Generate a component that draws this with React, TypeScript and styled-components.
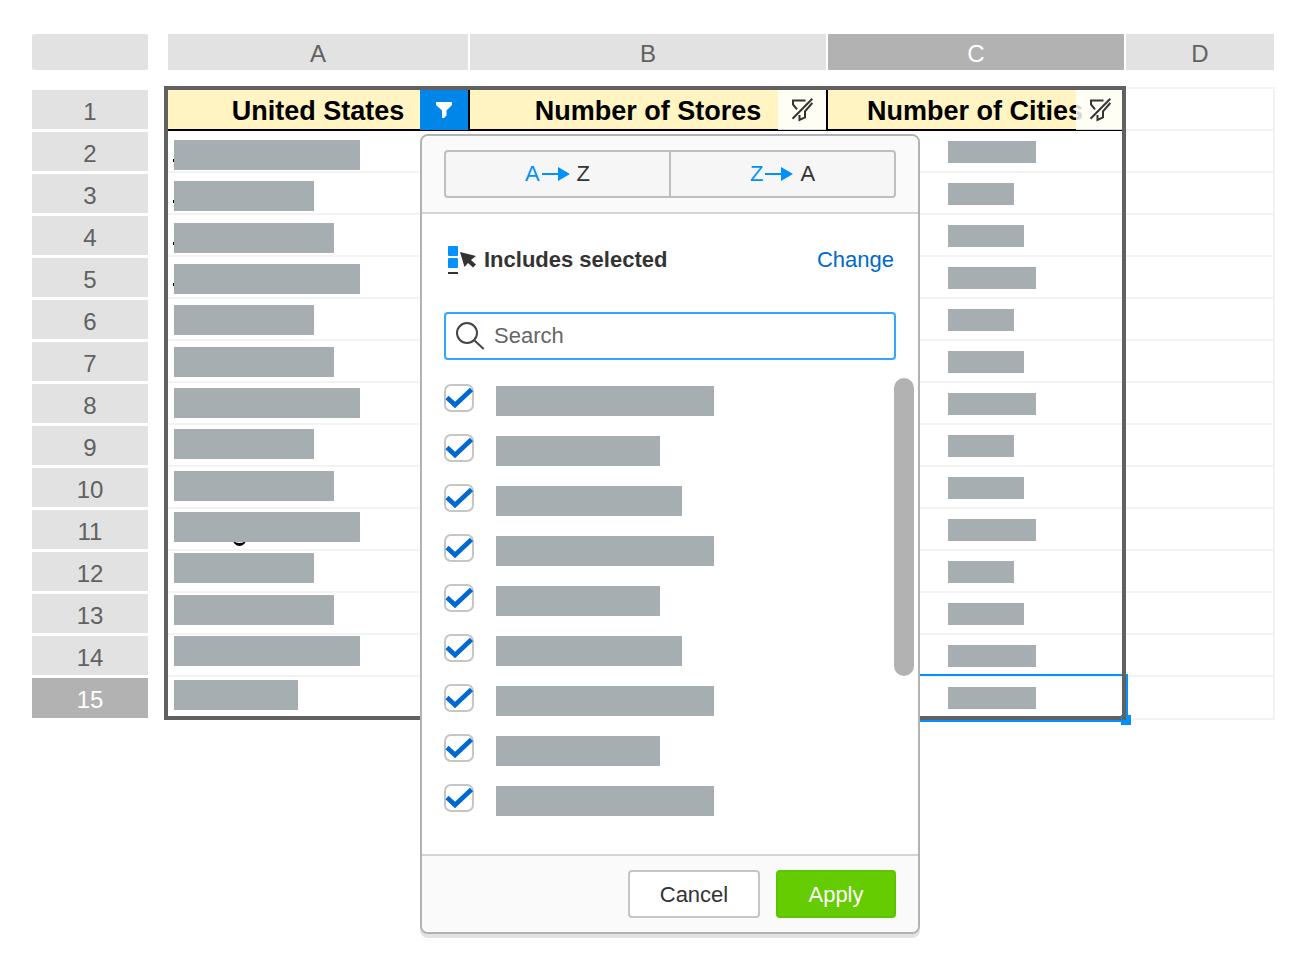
import React from "react";
import styled, { createGlobalStyle, css } from "styled-components";

const BAR = "#a6aeb1";
const BLUE = "#0091ff";
const FRAME = "#616161";
const LINE = "#f3f3f3";

const GlobalStyle = createGlobalStyle`
  *, *::before, *::after { box-sizing: border-box; }
  body {
    margin: 0;
    background: #fff;
    font-family: "Liberation Sans", Arial, Helvetica, sans-serif;
  }
  button, input { font-family: inherit; }
`;

const Page = styled.main`
  min-height: 100vh;
  padding: 34px 25px 34px 32px;
`;

const Sheet = styled.table`
  width: 100%;
  table-layout: fixed;
  border-spacing: 0;

  td, th { padding: 0; }
`;

const Col = styled.col<{ $width?: number }>`
  width: ${(p) => (p.$width ? `${p.$width}px` : "auto")};
`;

const LabelText = css<{ $active?: boolean }>`
  font-size: 24px;
  font-weight: 400;
  color: ${(p) => (p.$active ? "#fff" : "#616161")};
  background: ${(p) => (p.$active ? "#b2b2b2" : "#e2e2e2")};
`;

const Corner = styled.td`
  background: #e2e2e2;
  border-radius: 2px;
`;

const ColumnLabel = styled.th<{ $active?: boolean }>`
  ${LabelText}
  height: 36px;
  padding-top: 3px !important;
  line-height: 32px;
  border-right: 2px solid #fff;

  &:last-child { border-right-width: 1px; }
`;

const RowLabel = styled.th<{ $active?: boolean; $first?: boolean }>`
  ${LabelText}
  padding-top: 4px !important;
  line-height: 32px;
  border-top: ${(p) => (p.$first ? 0 : 1)}px solid #fff;
  border-bottom: 2px solid #fff;
`;

const GapCell = styled.td<{ $edge?: "frame" | "line" }>`
  height: 20px;
  ${(p) => p.$edge === "frame" && `border-bottom: 4px solid ${FRAME};`}
  ${(p) => p.$edge === "line" && `background: linear-gradient(${LINE}, ${LINE}) 0 17px / 100% 2px no-repeat;`}
`;

const FrameCell = styled.td`
  position: relative;
  z-index: 2;
  background: ${FRAME};
`;

const Row = styled.tr<{ $height: number }>`
  height: ${(p) => p.$height}px;
`;

const Cell = styled.td<{ $framed?: boolean; $closing?: boolean; $indent?: boolean }>`
  position: relative;
  vertical-align: top;
  padding: ${(p) => (p.$indent ? "10px 0 0 120px" : "0")} !important;
  border-right: ${(p) => (p.$framed ? 0 : 2)}px solid ${LINE};
  border-bottom: 2px solid ${LINE};
  ${(p) => p.$closing && `border-bottom: 4px solid ${FRAME};`}
`;

const TitleCell = styled.th<{ $framed?: boolean }>`
  position: relative;
  background: #fff4c2;
  border-bottom: 2px solid #000;
  border-right: ${(p) => (p.$framed ? 0 : 2)}px solid #000;
  padding-top: 2px !important;
  font-size: 27px;
  line-height: 36px;
  font-weight: 700;
  color: #000;
  white-space: nowrap;
`;

const FilterAnchor = styled.div<{ $open?: boolean; $framed?: boolean }>`
  position: absolute;
  z-index: ${(p) => (p.$open ? 5 : 1)};
  top: 0;
  right: ${(p) => (p.$framed ? -2 : 0)}px;
  width: 48px;
  height: 40px;
`;

const FilterButton = styled.button<{ $active?: boolean }>`
  display: flex;
  align-items: center;
  justify-content: center;
  width: 100%;
  height: 100%;
  padding: 0;
  border: 0;
  background: ${(p) => (p.$active ? "#0085e8" : "rgba(255, 255, 255, 0.84)")};
`;

const Bar = styled.span<{ $width: number; $height: number }>`
  position: relative;
  display: block;
  width: ${(p) => p.$width}px;
  height: ${(p) => p.$height}px;
  background: ${BAR};
`;

const NameBars = styled.div`
  position: absolute;
  z-index: 1;
  top: 9px;
  left: 6px;
`;

const NameStack = styled.div`
  display: flex;
  flex-direction: column;
  justify-content: space-between;
  height: 526px;
  margin-bottom: 14px;
`;

const NameBar = styled(Bar)<{ $peek?: "foot" | "tail" }>`
  ${(p) =>
    p.$peek === "foot" &&
    `&::before {
      content: "";
      position: absolute;
      left: -1px;
      top: 19px;
      width: 1px;
      height: 3px;
      background: #000;
    }`}
  ${(p) =>
    p.$peek === "tail" &&
    `&::before {
      content: "";
      position: absolute;
      left: 59px;
      top: 25px;
      width: 13px;
      height: 9px;
      border-bottom: 3px solid #000;
      border-radius: 0 0 7px 7px;
      clip-path: inset(5px 0 0 0);
    }`}
`;

const Selection = styled.div`
  position: absolute;
  z-index: 1;
  inset: -3px -6px -6px 0;
  border: 2px solid ${BLUE};
  border-left: 0;
`;

const Handle = styled.span`
  position: absolute;
  right: -7px;
  bottom: -5px;
  width: 12px;
  height: 10px;
  border-right: 2px solid #fff;
  background: ${BLUE};
`;

const Popup = styled.section`
  position: absolute;
  top: 44px;
  left: 0;
  width: 500px;
  overflow: hidden;
  border: 2px solid #b2b2b2;
  border-radius: 8px;
  background: #fff;
  box-shadow: 0 4px 0 #e2e2e2;
  font-size: 22px;
  line-height: 24px;
  font-weight: 400;
  color: #333;
  text-align: left;
`;

const SortBar = styled.header`
  padding: 14px 22px;
  border-bottom: 2px solid #d4d4d4;
  background: #fafafa;
`;

const SortGroup = styled.div`
  display: flex;
  border: 2px solid #bfbfbf;
  border-radius: 4px;
  background: #f6f6f6;
`;

const SortButton = styled.button`
  display: flex;
  flex: 1;
  align-items: center;
  justify-content: center;
  height: 44px;
  padding: 0;
  border: 0;
  background: none;
  font-size: 22px;
  color: #333;

  & + & { border-left: 2px solid #bfbfbf; }
  svg { margin: 0 7px 0 2px; }
`;

const From = styled.span`
  color: ${BLUE};
`;

const ModeRow = styled.div`
  display: flex;
  align-items: center;
  padding: 32px 24px 38px 26px;

  svg { margin-right: 8px; }
`;

const ModeTitle = styled.strong`
  flex: 1;
`;

const ChangeLink = styled.a`
  color: #0069cc;
  text-decoration: none;
`;

const SearchBox = styled.label`
  display: flex;
  align-items: center;
  height: 48px;
  margin: 0 22px;
  padding-left: 10px;
  border: 2px solid #33a7ff;
  border-radius: 4px;
`;

const SearchInput = styled.input`
  flex: 1;
  min-width: 0;
  margin-left: 8px;
  padding: 0;
  border: 0;
  outline: 0;
  background: none;
  font-size: 22px;
  color: #333;

  &::placeholder { color: #666; opacity: 1; }
`;

const ListArea = styled.div`
  display: flex;
  justify-content: space-between;
  padding: 18px 4px 38px 22px;
`;

const Options = styled.div`
  display: flex;
  flex-direction: column;
  gap: 18px;
  padding-top: 6px;
`;

const Option = styled.label`
  display: flex;
  align-items: flex-end;
  gap: 22px;
  height: 32px;
`;

const CheckSlot = styled.span`
  display: grid;
  align-self: flex-start;

  > * { grid-area: 1 / 1; }
  svg { pointer-events: none; display: none; position: relative; }
  input:checked + svg { display: block; }
`;

const CheckInput = styled.input`
  appearance: none;
  width: 30px;
  height: 28px;
  margin: 0;
  border: 2px solid #c6c6c6;
  border-radius: 7px;
  background: #fff;
`;

const ScrollThumb = styled.div`
  width: 20px;
  height: 298px;
  border-radius: 10px;
  background: #b2b2b2;
`;

const Footer = styled.footer`
  display: flex;
  justify-content: flex-end;
  gap: 16px;
  padding: 14px 22px;
  border-top: 2px solid #d4d4d4;
  background: #fafafa;
`;

const ActionButton = styled.button<{ $primary?: boolean }>`
  width: ${(p) => (p.$primary ? 120 : 132)}px;
  height: 48px;
  padding: 2px 0 0;
  border: 2px solid ${(p) => (p.$primary ? "#5fc400" : "#c6c6c6")};
  border-radius: 4px;
  background: ${(p) => (p.$primary ? "#64cc00" : "#fff")};
  font-size: 22px;
  color: ${(p) => (p.$primary ? "#fff" : "#333")};
`;

const FunnelIcon = () => (
  <svg width="16" height="16" viewBox="0 0 16 16" aria-hidden="true">
    <path d="M0 0h16v3l-5.500 5.500v5L8 16H6V8.500L0 3z" fill="#fff" />
  </svg>
);

const FunnelOffIcon = () => (
  <svg width="22" height="24" viewBox="0 0 22 24" fill="none" stroke="#333" strokeWidth="2" aria-hidden="true">
    <path d="M14.500 2.500H2v4l4 4.800" />
    <path d="M21.300 .700L1.500 20.700" />
    <path d="M21.300 5L14 13.300v6L8.500 22v-5" />
  </svg>
);

const ArrowIcon = () => (
  <svg width="28" height="14" viewBox="0 0 28 14" aria-hidden="true">
    <path d="M0 6h16V0l12 7-12 7V8H0z" fill={BLUE} />
  </svg>
);

const ModeIcon = () => (
  <svg width="28" height="28" viewBox="0 0 28 28" aria-hidden="true">
    <rect width="10" height="10" rx="1" fill={BLUE} />
    <rect y="12" width="10" height="10" rx="1" fill={BLUE} />
    <rect y="26" width="10" height="2" fill="#333" />
    <path d="M12 6l16 4-5 4 5 4.500-3 3-5-4.500-3.500 4z" fill="#333" />
  </svg>
);

const SearchIcon = () => (
  <svg width="30" height="30" viewBox="0 0 30 30" fill="none" stroke="#444" strokeWidth="2" aria-hidden="true">
    <circle cx="11" cy="12" r="10" />
    <path d="M18.500 19.500l9.200 8.600" />
  </svg>
);

const TickIcon = () => (
  <svg width="30" height="28" viewBox="0 0 30 28" aria-hidden="true">
    <path d="M3 13.500l8 7.500L27.500 5.500" fill="none" stroke="#0069d1" strokeWidth="4.600" />
  </svg>
);

const optionWidths = [218, 164, 186, 218, 164, 186, 218, 164, 218];
const nameWidths = [186, 140, 160, 186, 140, 160, 186, 140, 160, 186, 140, 160, 186];
const cityWidths = [88, 66, 76, 88, 66, 76, 88, 66, 76, 88, 66, 76, 88, 88];

const peekOf = (i: number) => (i < 4 ? "foot" : i === 9 ? "tail" : undefined);

function FilterPopup() {
  return (
    <Popup aria-label="Filter">
      <SortBar>
        <SortGroup>
          <SortButton type="button"><From>A</From><ArrowIcon />Z</SortButton>
          <SortButton type="button"><From>Z</From><ArrowIcon />A</SortButton>
        </SortGroup>
      </SortBar>
      <ModeRow>
        <ModeIcon />
        <ModeTitle>Includes selected</ModeTitle>
        <ChangeLink href="#change">Change</ChangeLink>
      </ModeRow>
      <SearchBox>
        <SearchIcon />
        <SearchInput type="text" placeholder="Search" aria-label="Search" />
      </SearchBox>
      <ListArea>
        <Options>
          {optionWidths.map((width, i) => (
            <Option key={i}>
              <CheckSlot>
                <CheckInput type="checkbox" defaultChecked aria-label={`Option ${i + 1}`} />
                <TickIcon />
              </CheckSlot>
              <Bar $width={width} $height={30} />
            </Option>
          ))}
        </Options>
        <ScrollThumb />
      </ListArea>
      <Footer>
        <ActionButton type="button">Cancel</ActionButton>
        <ActionButton type="button" $primary>Apply</ActionButton>
      </Footer>
    </Popup>
  );
}

export default function App() {
  return (
    <>
      <GlobalStyle />
      <Page>
        <Sheet>
          <colgroup>
            <Col $width={116} />
            <Col $width={16} />
            <Col $width={4} />
            <Col $width={302} />
            <Col $width={358} />
            <Col $width={294} />
            <Col $width={4} />
            <Col />
          </colgroup>
          <thead>
            <tr>
              <Corner />
              <td />
              <td />
              <ColumnLabel scope="col">A</ColumnLabel>
              <ColumnLabel scope="col">B</ColumnLabel>
              <ColumnLabel scope="col" colSpan={2} $active>C</ColumnLabel>
              <ColumnLabel scope="col">D</ColumnLabel>
            </tr>
          </thead>
          <tbody>
            <tr>
              <GapCell />
              <GapCell />
              <GapCell $edge="frame" colSpan={5} />
              <GapCell $edge="line" />
            </tr>
            <Row $height={41}>
              <RowLabel scope="row" $first>1</RowLabel>
              <td />
              <FrameCell />
              <TitleCell>
                United States
                <FilterAnchor $open>
                  <FilterButton type="button" $active aria-label="Filter United States"><FunnelIcon /></FilterButton>
                  <FilterPopup />
                </FilterAnchor>
              </TitleCell>
              <TitleCell>
                Number of Stores
                <FilterAnchor>
                  <FilterButton type="button" aria-label="Filter Number of Stores"><FunnelOffIcon /></FilterButton>
                </FilterAnchor>
              </TitleCell>
              <TitleCell $framed>
                Number of Cities
                <FilterAnchor $framed>
                  <FilterButton type="button" aria-label="Filter Number of Cities"><FunnelOffIcon /></FilterButton>
                </FilterAnchor>
              </TitleCell>
              <FrameCell />
              <Cell />
            </Row>
            {cityWidths.map((width, i) => {
              const closing = i === cityWidths.length - 1;
              return (
                <Row key={i} $height={closing ? 43 : 42}>
                  <RowLabel scope="row" $active={closing}>{i + 2}</RowLabel>
                  <td />
                  <FrameCell />
                  <Cell $closing={closing}>
                    {i === 0 && (
                      <NameBars>
                        <NameStack>
                          {nameWidths.map((nameWidth, n) => (
                            <NameBar key={n} $width={nameWidth} $height={30} $peek={peekOf(n)} />
                          ))}
                        </NameStack>
                        <NameBar $width={124} $height={30} />
                      </NameBars>
                    )}
                  </Cell>
                  <Cell $closing={closing} />
                  <Cell $closing={closing} $framed $indent>
                    <Bar $width={width} $height={22} />
                    {closing && <Selection><Handle /></Selection>}
                  </Cell>
                  <FrameCell />
                  <Cell />
                </Row>
              );
            })}
          </tbody>
        </Sheet>
      </Page>
    </>
  );
}
